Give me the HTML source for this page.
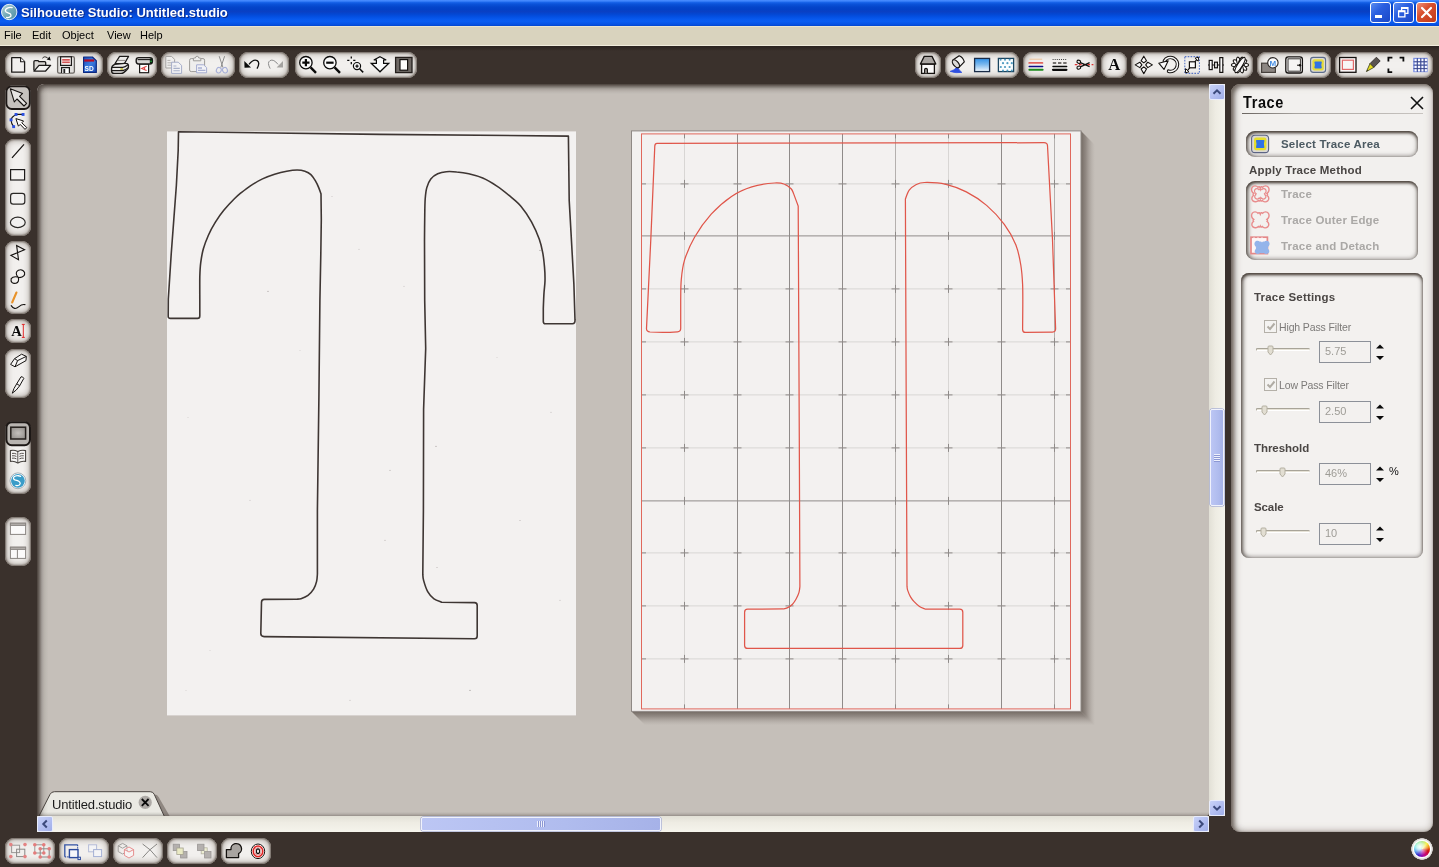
<!DOCTYPE html>
<html lang="en">
<head>
<meta charset="utf-8">
<title>Silhouette Studio: Untitled.studio</title>
<style>
*{box-sizing:border-box;margin:0;padding:0}
html,body{width:1439px;height:867px;overflow:hidden;background:#3a312c}
body{position:relative;font-family:"Liberation Sans",sans-serif;font-size:11px;color:#000}
.abs{position:absolute}
svg{position:absolute;overflow:visible}
#title{position:absolute;left:0;top:0;width:1439px;height:26px;
 background:linear-gradient(to bottom,#4a8cff 0,#3d84fb 4%,#1560e6 10%,#0a52d8 16%,#0444c9 28%,#0341c6 36%,#0a40c4 45%,#0447d2 54%,#0450e2 64%,#0859ee 74%,#0a5df2 82%,#0856e8 90%,#0650e2 95%,#0346cc 100%)}
#title .txt{position:absolute;left:20.5px;top:5px;font:bold 13px/16px "Liberation Sans",sans-serif;color:#fff;text-shadow:1px 1px 0 #0a2a8a;white-space:nowrap;letter-spacing:.03px}
.wb{position:absolute;top:2px;width:21px;height:21px;border:1px solid #fff;border-radius:3px;
 background:linear-gradient(135deg,#5a8cf0 0,#2a5fe0 40%,#1a48c8 100%)}
.wb.close{background:linear-gradient(135deg,#f0907a 0,#d8502e 40%,#c03a1a 100%)}
#menu{position:absolute;left:0;top:26px;width:1439px;height:20px;background:#d9d3be;border-top:1px solid #e9e4d2;border-bottom:1px solid #f1ecdc}
#menu span{position:absolute;top:1.3px;font:11px/14px "Liberation Sans",sans-serif;color:#000;white-space:nowrap}
#tb{position:absolute;left:0;top:46px;width:1439px;height:38px;background:linear-gradient(to bottom,#2a2320 0,#3a312c 5px)}
.g{position:absolute;background:#f2f0ee;border-radius:9px;box-shadow:inset 0 0 2px 1px rgba(84,74,66,.8),inset 0 0 6px 2px rgba(140,130,122,.6)}
.gt{top:52px;height:26px}
.gl{left:5px;width:26px}
.gb{top:838px;height:26px;width:50px}
#canvas{position:absolute;left:37px;top:83.6px;width:1172px;height:732.4px;background:#c5bfb9;border-radius:7px 0 3px 0;overflow:hidden}
#canvas:before{content:"";position:absolute;left:0;top:0;right:0;bottom:0;border-radius:7px 0 3px 0;
 background:linear-gradient(to right,rgba(59,51,46,.85) 0,rgba(59,51,46,.5) 2px,rgba(59,51,46,.2) 5px,rgba(59,51,46,.06) 8px,rgba(59,51,46,0) 11px) no-repeat,
 linear-gradient(to bottom,rgba(59,51,46,.85) 0,rgba(59,51,46,.46) 2px,rgba(59,51,46,.18) 5px,rgba(59,51,46,.06) 8px,rgba(59,51,46,0) 10px) no-repeat,
 linear-gradient(to top,rgba(59,51,46,.35) 0,rgba(59,51,46,.12) 2px,rgba(59,51,46,0) 4px) no-repeat;
 box-shadow:inset 3px 3px 3px 0 rgba(59,51,46,.35);pointer-events:none;z-index:5}
.sb{position:absolute;width:16px;height:16px;background:linear-gradient(135deg,#c8d2f8 0,#b0bcf0 60%,#a0aee8 100%);border:1px solid #e8ecfc;border-radius:2px}
.th{position:absolute;background:linear-gradient(to right,#bcc6f4 0,#b0bcee 60%,#a6b2e8 100%);border:1px solid #f0f2fc;border-radius:2px;box-shadow:0 0 0 .5px #8a96d0}
#panel{position:absolute;left:1231px;top:84px;width:202px;height:748px;background:#f2f0ee;border-radius:9px;box-shadow:inset 0 0 2px 0 rgba(110,100,92,.7),inset 0 0 7px 1px rgba(140,130,122,.5),inset 3px 3px 4px -1px rgba(70,60,52,.7),inset 6px 0 7px -3px rgba(70,60,52,.5)}
#panel>*{margin-left:1px}
.ptitle{position:absolute;left:10.8px;top:10px;font:bold 14.5px/17px "Liberation Sans",sans-serif;letter-spacing:.6px;color:#0a0a0a;transform:scaleY(1.09);transform-origin:0 3px}
.inset{position:absolute;border-radius:9px;background:#f3f1ef;box-shadow:inset 0 2px 3px 0 rgba(60,50,44,.85),inset 3px 0 4px -1px rgba(70,60,54,.55),inset 0 0 4px 1px rgba(90,80,74,.55),inset 0 -2px 2px 0 rgba(255,255,255,.7)}
.pb{position:absolute;font:bold 11.5px/14px "Liberation Sans",sans-serif;white-space:nowrap}
.pb.dis{color:#aaa8a6;letter-spacing:.2px}
.pl{position:absolute;font:10.5px/13px "Liberation Sans",sans-serif;color:#7c7a78;white-space:nowrap;letter-spacing:-.13px;margin-top:1px}
.cb{position:absolute;width:13px;height:13px;border:1px solid #b4b0a8;background:#f4f3f1}
.inp{position:absolute;left:87px;width:52px;height:22px;border:1px solid #8c9098;background:#f3f1ef;font:11px/19px "Liberation Sans",sans-serif;color:#9e9c96;padding-left:5px}
.trk{position:absolute;left:24px;width:54px;height:3px;border-radius:1.5px;background:#e6e2d6;border-top:1px solid #a8a498;border-left:1px solid #a8a498;border-bottom:1px solid #fff}
#menu span,#title .txt,.ptitle,.pb,.pl,.inp,.tabtxt{will-change:transform}
</style>
</head>
<body>
<div id="title">
 <svg style="left:0;top:3px" width="19" height="19" viewBox="0 0 19 19"><defs><linearGradient id="lg1" x1="0" y1="0" x2="1" y2="1"><stop offset="0" stop-color="#b8d8de"/><stop offset=".5" stop-color="#74a9b8"/><stop offset="1" stop-color="#4f8ea4"/></linearGradient></defs><circle cx="9.2" cy="9" r="7.7" fill="url(#lg1)" stroke="#e4f0fa" stroke-width="1"/><path d="M12.2 4.6C9 3.6 4.8 5.6 5.4 8.2C6 10.4 10.6 9.2 11 12C11.3 14 8.6 15 6.6 14.4" fill="none" stroke="#fff" stroke-width="1.3" stroke-linecap="round"/></svg>
 <div class="txt">Silhouette Studio: Untitled.studio</div>
 <div class="wb" style="left:1370px"></div>
 <div class="wb" style="left:1393px"></div>
 <div class="wb close" style="left:1416px"></div>
</div>
<div id="menu">
 <span style="left:3.9px">File</span><span style="left:32px">Edit</span><span style="left:62px">Object</span><span style="left:106.5px">View</span><span style="left:140px">Help</span>
</div>
<div id="tb"></div>
<div class="g gt" style="left:5px;width:98px"></div>
<div class="g gt" style="left:107px;width:50px"></div>
<div class="g gt" style="left:161px;width:74px"></div>
<div class="g gt" style="left:239px;width:50px"></div>
<div class="g gt" style="left:295px;width:122px"></div>
<div class="g gt" style="left:915px;width:26px"></div>
<div class="g gt" style="left:945px;width:74px"></div>
<div class="g gt" style="left:1023px;width:74px"></div>
<div class="g gt" style="left:1101px;width:26px"></div>
<div class="g gt" style="left:1131px;width:122px"></div>
<div class="g gt" style="left:1257px;width:74px"></div>
<div class="g gt" style="left:1335px;width:98px"></div>

<div class="g gl" style="top:85.4px;height:48.8px"></div>
<div class="g gl" style="top:138.8px;height:97.2px"></div>
<div class="g gl" style="top:240.8px;height:73px"></div>
<div class="g gl" style="top:319.2px;height:24.2px"></div>
<div class="g gl" style="top:349px;height:48.8px"></div>
<div class="g gl" style="top:421.4px;height:72.8px"></div>
<div class="g gl" style="top:517px;height:49px"></div>

<div id="canvas">
<svg id="cv" style="left:0;top:0" width="1172" height="732" viewBox="37 83.6 1172 732">
<!-- left scan -->
<rect x="167" y="131" width="409" height="584" fill="#f3f1f0"/>
<g id="speck"><circle cx="404" cy="286" r="0.6" fill="#6a625e" opacity="0.25"/><circle cx="268" cy="291" r="0.6" fill="#6a625e" opacity="0.50"/><circle cx="497" cy="357" r="0.5" fill="#6a625e" opacity="0.25"/><circle cx="551" cy="412" r="0.7" fill="#6a625e" opacity="0.25"/><circle cx="436" cy="446" r="0.6" fill="#6a625e" opacity="0.50"/><circle cx="437" cy="567" r="0.5" fill="#6a625e" opacity="0.50"/><circle cx="188" cy="417" r="0.5" fill="#6a625e" opacity="0.25"/><circle cx="332" cy="196" r="0.5" fill="#6a625e" opacity="0.35"/><circle cx="359" cy="249" r="0.6" fill="#6a625e" opacity="0.25"/><circle cx="300" cy="350" r="0.5" fill="#6a625e" opacity="0.25"/><circle cx="390" cy="470" r="0.7" fill="#6a625e" opacity="0.35"/><circle cx="520" cy="520" r="0.5" fill="#6a625e" opacity="0.50"/><circle cx="210" cy="650" r="0.5" fill="#6a625e" opacity="0.25"/><circle cx="470" cy="690" r="0.7" fill="#6a625e" opacity="0.50"/><circle cx="350" cy="700" r="0.7" fill="#6a625e" opacity="0.25"/><circle cx="540" cy="250" r="0.7" fill="#6a625e" opacity="0.50"/><circle cx="250" cy="500" r="0.6" fill="#6a625e" opacity="0.25"/><circle cx="186" cy="690" r="0.5" fill="#6a625e" opacity="0.25"/><circle cx="560" cy="600" r="0.7" fill="#6a625e" opacity="0.25"/><circle cx="385" cy="540" r="0.6" fill="#6a625e" opacity="0.35"/></g>
<path id="tl" d="M178.5 131.4L380.0 134.0L568.4 135.7L569.2 200.0L571.0 232.0L573.9 284.0L575.0 319.5Q575.2 323.2 572.5 323.3L545.4 323.3Q543.3 323.3 543.3 321L543.3 308.0C543.4 305.4 543.7 297.1 544.0 292.5C544.3 287.9 544.9 284.6 545.0 280.3C545.1 276.0 544.9 271.1 544.5 266.5C544.1 261.9 543.7 257.3 542.8 252.7C541.9 248.1 541.2 244.0 539.3 238.8C537.4 233.6 534.5 227.0 531.5 221.5C528.5 216.0 524.7 210.3 521.1 206.0C517.5 201.7 514.1 199.2 510.0 195.8C505.9 192.4 501.1 188.5 496.5 185.5C491.9 182.5 487.3 179.7 482.7 177.7C478.1 175.7 473.1 174.4 468.8 173.4C464.5 172.4 460.4 171.9 456.7 171.6C452.9 171.2 449.5 171.0 446.3 171.3C443.1 171.6 440.3 172.2 437.7 173.4C435.1 174.6 432.6 176.2 430.8 178.5C429.0 180.8 427.7 183.9 426.8 187.2C425.9 190.5 425.6 193.1 425.2 198.4C424.8 203.7 424.8 212.3 424.7 219.2C424.6 226.1 424.5 236.5 424.5 240.0L424.7 300.0L425.7 348.0L423.6 409.0L423.4 510.0L422.8 574.0C422.9 575.0 422.8 577.1 423.6 580.0C424.4 582.9 426.0 588.2 427.7 591.3C429.4 594.4 431.7 596.8 434.0 598.5C436.3 600.2 440.4 601.2 441.7 601.8L474.5 602.2Q477.2 602.2 477.2 605L477.2 635.5Q477.2 638.3 474.5 638.3L264.1 636.2Q260.8 636.2 260.8 633.2L261.5 601.8Q261.6 599 264.3 599L297.0 598.8C297.7 598.7 299.2 598.9 301.0 598.3C302.8 597.7 305.9 596.6 308.0 595.0C310.1 593.4 312.2 591.1 313.6 588.8C315.0 586.5 316.0 583.5 316.6 581.0C317.2 578.5 317.3 574.8 317.4 573.6L317.4 510.0L318.9 397.0L319.9 300.0L320.8 253.8L321.3 219.2L321.0 193.3C320.6 192.3 319.6 189.4 318.7 187.2C317.8 185.0 316.6 182.5 315.3 180.3C314.0 178.1 312.6 175.8 310.9 174.2C309.2 172.6 307.2 171.6 304.9 170.8C302.6 170.0 300.1 169.6 297.1 169.6C294.1 169.6 290.4 170.1 286.7 170.8C282.9 171.5 278.6 172.6 274.6 173.9C270.6 175.2 266.5 176.6 262.5 178.5C258.5 180.4 254.2 183.0 250.4 185.5C246.7 188.0 242.7 191.2 240.0 193.3C237.3 195.5 237.1 195.7 234.4 198.4C231.7 201.1 227.2 205.8 224.0 209.7C220.8 213.6 218.0 217.6 215.4 221.8C212.8 226.0 210.4 230.3 208.4 234.8C206.4 239.3 204.6 244.0 203.3 248.6C202.0 253.2 201.3 257.9 200.7 262.5C200.1 267.1 200.0 270.2 199.8 276.3C199.7 282.4 199.8 295.1 199.8 298.8L199.8 315.5Q199.8 318 197.5 318L170.5 318.0Q168 318 168.2 315.5L168.3 298.8L171.2 253.8L173.8 219.2L176.4 184.6L178.2 150.0Z" fill="none" stroke="#3e3633" stroke-width="1.6" stroke-linejoin="round"/>
<!-- right page -->
<defs><linearGradient id="shr" x1="0" y1="0" x2="1" y2="0"><stop offset="0" stop-color="#6f665f" stop-opacity=".95"/><stop offset=".35" stop-color="#857c76" stop-opacity=".8"/><stop offset="1" stop-color="#a8a09a" stop-opacity="0"/></linearGradient>
<linearGradient id="shb" x1="0" y1="0" x2="0" y2="1"><stop offset="0" stop-color="#6f665f" stop-opacity=".95"/><stop offset=".35" stop-color="#857c76" stop-opacity=".8"/><stop offset="1" stop-color="#a8a09a" stop-opacity="0"/></linearGradient></defs>
<polygon points="1081,130.5 1095,144.5 1095,725 1081,711" fill="url(#shr)"/>
<polygon points="631.5,711 1081,711 1095,725 645.5,725" fill="url(#shb)"/>
<rect x="631.5" y="130.5" width="449.5" height="580.5" fill="#f3f1f0" stroke="#8f8985" stroke-width="1"/>
<g id="grid" stroke="#9a9a9a" stroke-width="1" fill="none"><path d="M684.5 133.5V708.5M948.5 133.5V708.5M641.5 183.5H1070.5M641.5 288.5H1070.5M641.5 341.5H1070.5M641.5 394.5H1070.5M641.5 447.5H1070.5M641.5 552.5H1070.5M641.5 605.5H1070.5M641.5 658.5H1070.5" stroke="#d8d6d4"/><path d="M895.5 133.5V708.5M1054.5 133.5V708.5" stroke="#b4b0ae"/><path d="M737.5 133.5V708.5M789.5 133.5V708.5M842.5 133.5V708.5M1001.5 133.5V708.5M641.5 235.5H1070.5M641.5 500.5H1070.5" stroke="#8f8b89"/><path d="M680.5 183.5h8M684.5 179.5v8M684.5 231.5v8M680.5 288.5h8M684.5 284.5v8M680.5 341.5h8M684.5 337.5v8M680.5 394.5h8M684.5 390.5v8M680.5 447.5h8M684.5 443.5v8M684.5 496.5v8M680.5 552.5h8M684.5 548.5v8M680.5 605.5h8M684.5 601.5v8M680.5 658.5h8M684.5 654.5v8M733.5 183.5h8M733.5 288.5h8M733.5 341.5h8M733.5 394.5h8M733.5 447.5h8M733.5 552.5h8M733.5 605.5h8M733.5 658.5h8M785.5 183.5h8M785.5 288.5h8M785.5 341.5h8M785.5 394.5h8M785.5 447.5h8M785.5 552.5h8M785.5 605.5h8M785.5 658.5h8M838.5 183.5h8M838.5 288.5h8M838.5 341.5h8M838.5 394.5h8M838.5 447.5h8M838.5 552.5h8M838.5 605.5h8M838.5 658.5h8M891.5 183.5h8M895.5 179.5v8M895.5 231.5v8M891.5 288.5h8M895.5 284.5v8M891.5 341.5h8M895.5 337.5v8M891.5 394.5h8M895.5 390.5v8M891.5 447.5h8M895.5 443.5v8M895.5 496.5v8M891.5 552.5h8M895.5 548.5v8M891.5 605.5h8M895.5 601.5v8M891.5 658.5h8M895.5 654.5v8M944.5 183.5h8M948.5 179.5v8M948.5 231.5v8M944.5 288.5h8M948.5 284.5v8M944.5 341.5h8M948.5 337.5v8M944.5 394.5h8M948.5 390.5v8M944.5 447.5h8M948.5 443.5v8M948.5 496.5v8M944.5 552.5h8M948.5 548.5v8M944.5 605.5h8M948.5 601.5v8M944.5 658.5h8M948.5 654.5v8M997.5 183.5h8M997.5 288.5h8M997.5 341.5h8M997.5 394.5h8M997.5 447.5h8M997.5 552.5h8M997.5 605.5h8M997.5 658.5h8M1050.5 183.5h8M1054.5 179.5v8M1054.5 231.5v8M1050.5 288.5h8M1054.5 284.5v8M1050.5 341.5h8M1054.5 337.5v8M1050.5 394.5h8M1054.5 390.5v8M1050.5 447.5h8M1054.5 443.5v8M1054.5 496.5v8M1050.5 552.5h8M1054.5 548.5v8M1050.5 605.5h8M1054.5 601.5v8M1050.5 658.5h8M1054.5 654.5v8M641.5 183.5h4.5M1070.5 183.5h-4.5M641.5 288.5h4.5M1070.5 288.5h-4.5M641.5 341.5h4.5M1070.5 341.5h-4.5M641.5 394.5h4.5M1070.5 394.5h-4.5M641.5 447.5h4.5M1070.5 447.5h-4.5M641.5 552.5h4.5M1070.5 552.5h-4.5M641.5 605.5h4.5M1070.5 605.5h-4.5M641.5 658.5h4.5M1070.5 658.5h-4.5M684.5 133.5v4.5M684.5 708.5v-4.5M895.5 133.5v4.5M895.5 708.5v-4.5M948.5 133.5v4.5M948.5 708.5v-4.5M1054.5 133.5v4.5M1054.5 708.5v-4.5" stroke="#8f8b89"/></g>
<path id="tr" d="M657 143L1044.0 142.3Q1047.3 142.3 1047.5 145.3L1052.5 239.2L1055.6 328.0Q1055.8 331.6 1052.5 331.7L1025.5 332.0Q1022.6 332 1022.6 329L1022.8 305.0C1022.8 301.5 1022.9 290.7 1022.6 284.0C1022.3 277.3 1021.9 271.2 1020.8 264.6C1019.7 258.0 1018.5 251.1 1015.8 244.3C1013.0 237.5 1009.2 230.6 1004.3 224.0C999.4 217.4 992.9 210.4 986.6 205.0C980.3 199.6 973.1 195.0 966.3 191.5C959.5 188.0 953.0 185.5 946.0 183.9C939.0 182.3 929.5 182.0 924.4 182.1C919.3 182.2 918.0 183.3 915.5 184.6C913.0 185.9 910.9 187.4 909.2 189.7C907.5 192.0 906.0 197.1 905.4 198.6L906.2 400.0L907.0 586.0C907.1 586.7 907.1 588.2 907.7 590.0C908.3 591.8 909.4 594.6 910.5 596.5C911.6 598.4 912.6 599.6 914.1 601.2C915.6 602.8 917.6 604.7 919.5 606.0C921.4 607.3 924.5 608.3 925.5 608.8L959.7 608.8Q962.8 608.8 962.8 611.8L962.8 645.1Q962.8 648.1 959.7 648.1L747.6 648.1Q744.6 648.1 744.6 645.1L744.6 611.8Q744.6 608.8 747.6 608.8L783.0 608.6C783.7 608.4 785.6 608.3 787.2 607.5C788.8 606.7 791.0 605.3 792.5 603.8C794.0 602.3 795.0 600.6 796.1 598.6C797.2 596.6 798.4 594.1 799.0 592.0C799.6 589.9 799.8 587.0 799.9 586.0L799.3 440.0L798.2 205.7L793.5 193.0C793.1 192.2 792.6 189.9 791.1 188.4C789.6 186.9 787.5 184.9 784.8 183.9C782.0 182.9 780.1 182.2 774.6 182.6C769.1 183.0 759.0 184.2 751.8 186.4C744.6 188.6 738.3 191.4 731.5 196.0C724.7 200.6 717.3 207.0 711.2 213.8C705.1 220.6 699.1 229.0 694.7 236.6C690.3 244.2 686.8 252.4 684.6 259.5C682.4 266.6 681.9 272.2 681.3 279.0C680.6 285.8 680.8 296.5 680.7 300.0L680.7 328.2Q680.7 331.3 677.5 331.5Q663 332.5 650 331.6Q646.3 331 646.5 328L650.8 239.2L654.8 145.5Q655 143 657 143Z" fill="none" stroke="#e0564a" stroke-width="1.25"/>
<rect x="641.5" y="133.5" width="429" height="575" fill="none" stroke="#e0685c" stroke-width="1"/>
</svg>

</div>
<div class="abs" style="left:1209px;top:84px;width:16px;height:732px;background:linear-gradient(to right,#e2e0d6 0,#eeece3 40%,#f5f4ec 100%)"></div>
<div class="abs" style="left:37px;top:816px;width:1172px;height:16px;background:linear-gradient(to bottom,#e2e0d6 0,#eeece3 40%,#f5f4ec 100%)"></div>
<div class="sb" style="left:1209px;top:84px"><svg style="left:2px;top:2px" width="10" height="10" viewBox="0 0 10 10"><path d="M1.5 6.8L5 3.3L8.5 6.8" fill="none" stroke="#3c4a7c" stroke-width="2" transform="rotate(0 5 5)"/></svg></div>
<div class="sb" style="left:1209px;top:800px"><svg style="left:2px;top:2px" width="10" height="10" viewBox="0 0 10 10"><path d="M1.5 6.8L5 3.3L8.5 6.8" fill="none" stroke="#3c4a7c" stroke-width="2" transform="rotate(180 5 5)"/></svg></div>
<div class="sb" style="left:37px;top:816px"><svg style="left:2px;top:2px" width="10" height="10" viewBox="0 0 10 10"><path d="M1.5 6.8L5 3.3L8.5 6.8" fill="none" stroke="#3c4a7c" stroke-width="2" transform="rotate(270 5 5)"/></svg></div>
<div class="sb" style="left:1193px;top:816px"><svg style="left:2px;top:2px" width="10" height="10" viewBox="0 0 10 10"><path d="M1.5 6.8L5 3.3L8.5 6.8" fill="none" stroke="#3c4a7c" stroke-width="2" transform="rotate(90 5 5)"/></svg></div>
<div class="th" style="left:1210px;top:409px;width:14px;height:97px"><div class="abs" style="left:3px;top:44px;width:6px;height:8px;background:repeating-linear-gradient(to bottom,#eef0fc 0,#eef0fc 1px,#8c98d4 1px,#8c98d4 2px)"></div></div>
<div class="th" style="left:421px;top:817px;width:240px;height:14px"><div class="abs" style="left:115px;top:3px;width:8px;height:6px;background:repeating-linear-gradient(to right,#eef0fc 0,#eef0fc 1px,#8c98d4 1px,#8c98d4 2px)"></div></div>

<div id="panel">
 <div class="ptitle">Trace</div>
 <svg style="left:178px;top:12px" width="14" height="14" viewBox="0 0 14 14"><path d="M1 1L13 13M13 1L1 13" stroke="#111" stroke-width="1.6" fill="none"/></svg>
 <div class="abs" style="left:10px;top:29px;width:181px;height:1px;background:linear-gradient(to right,#6a6460,#a8a4a0 30%,#c8c4c0 100%)"></div>
 <div class="inset" style="left:14px;top:47px;width:172px;height:26px"></div>
 <div class="pb" style="left:49px;top:53px;color:#4c5a62;letter-spacing:.2px">Select Trace Area</div>
 <div class="pb" style="left:17px;top:79px;color:#4a4644;letter-spacing:.2px">Apply Trace Method</div>
 <div class="inset" style="left:14px;top:97px;width:172px;height:79px"></div>
 <div class="pb dis" style="left:49px;top:103px">Trace</div>
 <div class="pb dis" style="left:49px;top:129px">Trace Outer Edge</div>
 <div class="pb dis" style="left:49px;top:155px">Trace and Detach</div>
 <div class="inset" style="left:9px;top:189px;width:182px;height:285px;border-radius:8px"></div>
 <div class="pb" style="left:22px;top:206px;color:#4a4644;letter-spacing:.2px">Trace Settings</div>
 <div class="cb" style="left:32px;top:236px"></div>
 <div class="pl" style="left:46.6px;top:236px">High Pass Filter</div>
 <div class="cb" style="left:32px;top:294px"></div>
 <div class="pl" style="left:46.6px;top:294px">Low Pass Filter</div>
 <div class="pb" style="left:22px;top:357px;color:#4a4644;letter-spacing:-.05px">Threshold</div>
 <div class="pb" style="left:21.5px;top:416px;color:#4a4644;letter-spacing:-.1px">Scale</div>
 <div class="inp" style="top:257px">5.75</div>
 <div class="inp" style="top:317px">2.50</div>
 <div class="inp" style="top:379px">46%</div>
 <div class="inp" style="top:439px">10</div>
 <div class="pl" style="left:157px;top:380px;color:#111;font-size:11px">%</div>
 <div class="trk" style="top:264.0px"></div><svg style="left:34.5px;top:260.5px" width="7" height="11" viewBox="0 0 7 11"><path d="M1 2Q1 1 2 1H5Q6 1 6 2V7L3.5 10L1 7Z" fill="#e2ded2" stroke="#b4b0a2" stroke-width="1"/></svg>
 <div class="trk" style="top:324.0px"></div><svg style="left:28.5px;top:320.5px" width="7" height="11" viewBox="0 0 7 11"><path d="M1 2Q1 1 2 1H5Q6 1 6 2V7L3.5 10L1 7Z" fill="#e2ded2" stroke="#b4b0a2" stroke-width="1"/></svg>
 <div class="trk" style="top:386.0px"></div><svg style="left:46.5px;top:382.5px" width="7" height="11" viewBox="0 0 7 11"><path d="M1 2Q1 1 2 1H5Q6 1 6 2V7L3.5 10L1 7Z" fill="#e2ded2" stroke="#b4b0a2" stroke-width="1"/></svg>
 <div class="trk" style="top:446.0px"></div><svg style="left:27.7px;top:442.5px" width="7" height="11" viewBox="0 0 7 11"><path d="M1 2Q1 1 2 1H5Q6 1 6 2V7L3.5 10L1 7Z" fill="#e2ded2" stroke="#b4b0a2" stroke-width="1"/></svg>
 <svg style="left:143.5px;top:260.0px" width="8" height="17" viewBox="0 0 8 17"><path d="M0 4.5L4 .5L8 4.5ZM0 12L4 16L8 12Z" fill="#0a0a0a"/></svg>
 <svg style="left:143.5px;top:320.3px" width="8" height="17" viewBox="0 0 8 17"><path d="M0 4.5L4 .5L8 4.5ZM0 12L4 16L8 12Z" fill="#0a0a0a"/></svg>
 <svg style="left:143.5px;top:382.4px" width="8" height="17" viewBox="0 0 8 17"><path d="M0 4.5L4 .5L8 4.5ZM0 12L4 16L8 12Z" fill="#0a0a0a"/></svg>
 <svg style="left:143.5px;top:442.0px" width="8" height="17" viewBox="0 0 8 17"><path d="M0 4.5L4 .5L8 4.5ZM0 12L4 16L8 12Z" fill="#0a0a0a"/></svg>
 <svg style="left:33.5px;top:238.0px" width="10" height="10" viewBox="0 0 10 10"><path d="M1.5 4.5L4 7L8.5 1.5" fill="none" stroke="#b0aca4" stroke-width="2"/></svg>
 <svg style="left:33.5px;top:296.3px" width="10" height="10" viewBox="0 0 10 10"><path d="M1.5 4.5L4 7L8.5 1.5" fill="none" stroke="#b0aca4" stroke-width="2"/></svg>
</div>

<div class="g gb" style="left:5px"></div>
<div class="g gb" style="left:59px"></div>
<div class="g gb" style="left:113px"></div>
<div class="g gb" style="left:167px"></div>
<div class="g gb" style="left:221px"></div>

<div class="abs" style="left:1411px;top:838px;width:22px;height:22px;border-radius:50%;background:radial-gradient(circle at 50% 50%,#fff 0,#fff 8.6px,#e8e6e4 9.4px,#d0ccc8 10.6px,rgba(120,110,104,.4) 11px)"></div>
<div class="abs" style="left:1413.6px;top:840.6px;width:16.8px;height:16.8px;border-radius:50%;background:radial-gradient(circle at 38% 36%,rgba(255,255,255,.98) 0,rgba(255,255,255,.75) 22%,rgba(255,255,255,0) 62%),conic-gradient(from 0deg,#7ad83c 0deg,#f2ee20 40deg,#f28a10 75deg,#d01010 105deg,#c80878 150deg,#8a10b8 185deg,#2a18c8 215deg,#1c8ae8 255deg,#30e0d8 290deg,#40d860 330deg,#7ad83c 360deg)"></div>
<svg style="left:37px;top:788px" width="140" height="30" viewBox="37 788 140 30"><path d="M52 816L60 797Q61.4 794.6 64 794.6H154.6Q157.2 794.6 158.6 797L169.6 816Z" fill="#6a625c" opacity=".6"/><path d="M39 816L50 794.4Q51.4 791.7 54.4 791.7H150.2Q153 791.7 154.2 794.2L164.2 816Z" fill="#eae9e3"/><path d="M39 816L50 794.4Q51.4 791.7 54.4 791.7H150.2Q153 791.7 154.2 794.2L164.2 816" fill="none" stroke="#4a4440" stroke-width="1"/><circle cx="145.2" cy="802.4" r="6.6" fill="#aeaaa6"/><path d="M141.8 799L148.6 805.8M148.6 799L141.8 805.8" stroke="#0a0a0a" stroke-width="1.8"/></svg>
<div class="abs tabtxt" style="left:52.3px;top:797px;font:13px/16px 'Liberation Sans',sans-serif;letter-spacing:-.15px;color:#1a1a1a;white-space:nowrap">Untitled.studio</div>
<!-- ICONS-START --><svg id="icons" style="left:0;top:0;pointer-events:none;will-change:transform" width="1439" height="867" viewBox="0 0 1439 867">
<!-- group -->
<rect x="11.6" y="845.2" width="8" height="7.4" fill="none" stroke="#9a9896" stroke-width="1"/>
<rect x="16.6" y="849.2" width="8.2" height="7.4" fill="none" stroke="#8a8886" stroke-width="1"/>
<g fill="#e48484"><circle cx="10.8" cy="844.6" r="1.8"/><circle cx="25" cy="844.6" r="1.8"/><circle cx="10.8" cy="856.6" r="1.8"/><circle cx="25" cy="856.6" r="1.8"/></g>
<!-- ungroup -->
<rect x="34.8" y="844.8" width="9" height="8.2" fill="none" stroke="#9a9896" stroke-width="1"/>
<rect x="40.2" y="848.8" width="9" height="8.2" fill="none" stroke="#8a8886" stroke-width="1"/>
<g fill="#e47c7c"><circle cx="34.8" cy="844.8" r="1.8"/><circle cx="43.8" cy="844.8" r="1.8"/><circle cx="34.8" cy="853" r="1.8"/><circle cx="43.8" cy="853" r="1.8"/><circle cx="40.2" cy="848.8" r="1.8"/><circle cx="49.2" cy="848.8" r="1.8"/><circle cx="40.2" cy="857" r="1.8"/><circle cx="49.2" cy="857" r="1.8"/></g>
<!-- select all -->
<path d="M77.6 844.8H64.8V856.8" fill="none" stroke="#3252a4" stroke-width="1.3"/>
<path d="M77.6 844.8V849M64.8 856.8H69" fill="none" stroke="#3252a4" stroke-width="1.2" stroke-dasharray="1.4 1"/>
<rect x="69.4" y="849.6" width="8.6" height="8" fill="#f6f6fa" stroke="#2c4a9c" stroke-width="1.4"/>
<rect x="78" y="857.2" width="2.4" height="2.4" fill="#f6f6fa" stroke="#2c4a9c" stroke-width="1"/>
<!-- deselect -->
<rect x="88.6" y="844.8" width="8" height="7" fill="#f4f4f6" stroke="#b4bcd8" stroke-width="1"/>
<rect x="93.6" y="849.6" width="8" height="7" fill="#f4f4f6" stroke="#a4b0d4" stroke-width="1"/>
<!-- duplicate -->
<path d="M122.6 843.4L127 845.8V851.6L122.6 854L118.2 851.6V845.8ZM118.2 845.8L122.6 848.2L127 845.8" fill="none" stroke="#9a9896" stroke-width=".9" stroke-linejoin="round"/>
<path d="M129 847L133.6 849.6V855.4L129 858L124.4 855.4V849.6ZM124.4 849.6L129 852L133.6 849.6" fill="#f8f4f4" stroke="#e48484" stroke-width=".9" stroke-linejoin="round"/>
<!-- delete -->
<path d="M142.6 844Q150.6 849 157 857.6M157 844Q149 849.6 142.6 857.6" fill="none" stroke="#7c7a78" stroke-width=".9"/>
<!-- bring front -->
<rect x="173.2" y="844.2" width="6.4" height="6.4" fill="#b4b0ae" stroke="#9a9694" stroke-width=".8"/>
<rect x="180.6" y="851.6" width="6.4" height="6.4" fill="#b4b0ae" stroke="#9a9694" stroke-width=".8"/>
<rect x="176.8" y="848" width="6.4" height="6.4" fill="#eaeac4" stroke="#a4a290" stroke-width=".8"/>
<!-- send back -->
<rect x="201.2" y="847.8" width="6" height="6" fill="#eeeed4" stroke="#b4b2a0" stroke-width=".8"/>
<rect x="197.6" y="844.2" width="6.4" height="6.4" fill="#b4b0ae" stroke="#9a9694" stroke-width=".8"/>
<rect x="204.6" y="851.6" width="6.4" height="6.4" fill="#b4b0ae" stroke="#9a9694" stroke-width=".8"/>
<!-- weld -->
<path d="M226.4 849.6H231A5.3 5.3 0 1 1 238.6 853.6V857.6H226.4Z" fill="#a8a4a0" stroke="#14110f" stroke-width="1.3" stroke-linejoin="round"/>
<!-- offset -->
<ellipse cx="258" cy="851.3" rx="6.7" ry="7.3" fill="#fbfafa" stroke="#14110f" stroke-width="1"/>
<ellipse cx="258" cy="851.3" rx="4.8" ry="5.4" fill="none" stroke="#e02424" stroke-width="1.5"/>
<ellipse cx="258" cy="851.3" rx="3.2" ry="3.8" fill="none" stroke="#e87070" stroke-width=".7"/>
<ellipse cx="258" cy="851.3" rx="1.6" ry="2.4" fill="none" stroke="#14110f" stroke-width="1.2"/>
<!-- window buttons -->
<rect x="1375" y="15" width="7" height="3" fill="#fff"/>
<path d="M1401.6 10.6V7.6H1407.9V13.4H1405.6M1398.6 11H1404.9V16.8H1398.6Z" fill="none" stroke="#fff" stroke-width="1.3"/>
<path d="M1398.6 11.4H1404.9M1401.6 8H1407.9" stroke="#fff" stroke-width="1.8"/>
<path d="M1422 8L1431 17M1431 8L1422 17" stroke="#fff" stroke-width="2.2" stroke-linecap="round"/>
<!-- selected box: select tool -->
<rect x="6.4" y="86.4" width="23.4" height="22.6" rx="5.4" fill="#c6c2be" stroke="#1c1715" stroke-width="1.8"/>
<path d="M10.3 88.8L22.6 93.4L19.6 96.4L26.6 103.4L24 106L17 99L14.3 101.9Z" fill="#e6e4e2" stroke="#14110f" stroke-width="1.1" stroke-linejoin="round"/>
<!-- edit points -->
<path d="M16 114.4H23M16 114.4Q11.4 117 11 119.8Q11.2 123.6 13.6 126.6" fill="none" stroke="#14110f" stroke-width="1.1"/>
<g fill="#2c50e2"><rect x="14.6" y="113" width="2.9" height="2.9"/><rect x="21.6" y="113" width="2.9" height="2.9"/><rect x="9.6" y="118.4" width="2.9" height="2.9"/><rect x="12.2" y="125.2" width="2.9" height="2.9"/></g>
<path d="M15.9 118.6L23.6 121L21.8 122.8L26.8 127.6L25 129.4L20.2 124.4L18.4 126.2Z" fill="#fbfafa" stroke="#14110f" stroke-width="1" stroke-linejoin="round"/>
<!-- line -->
<path d="M12 157.8L24 144.3" stroke="#14110f" stroke-width="1.2"/>
<!-- rect -->
<rect x="10.6" y="169.6" width="14" height="10.4" fill="#f2f1f0" stroke="#1c1a19" stroke-width="1.2"/>
<!-- rounded rect -->
<rect x="10.6" y="193.4" width="14.2" height="10.8" rx="2.6" fill="#f2f1f0" stroke="#2a2826" stroke-width="1.2"/>
<!-- ellipse -->
<ellipse cx="17.8" cy="222.4" rx="7.4" ry="5.2" fill="#f2f1f0" stroke="#2a2826" stroke-width="1.2"/>
<!-- polygon -->
<path d="M16.6 245.4L24.6 249.7L10.9 255.4L18.5 259.8Z" fill="none" stroke="#14110f" stroke-width="1.1" stroke-linejoin="miter"/>
<!-- curve -->
<path d="M17.8 277Q14.4 272.4 18.4 270.2Q22.6 268.6 24.6 272.6Q25.4 276.6 19.6 277.6Q13.6 275.6 11.2 278.6Q10.4 282.6 14 283.4Q18.6 283.4 18.6 279.4Q18.6 278.2 17.8 277Z" fill="none" stroke="#14110f" stroke-width="1.1"/>
<!-- freehand -->
<path d="M16.4 292.6L12.2 302.4" stroke="#e8922a" stroke-width="2.2" stroke-linecap="round"/>
<path d="M11.2 305.6Q14.4 310.6 18.6 306.8Q22 304 25 304.6" fill="none" stroke="#14110f" stroke-width="1.1" stroke-linecap="round"/>
<!-- text -->
<text x="11.2" y="335.6" font-family="'Liberation Serif',serif" font-weight="bold" font-size="14.6" fill="#0a0a0a">A</text>
<path d="M23.3 324.4V337.4M21.8 324.4H24.8M21.8 337.4H24.8" stroke="#e02828" stroke-width="1"/>
<!-- eraser -->
<path d="M14.6 358.6L21.6 354.2L26.3 356.4L26 360.6L15 366.8L10.6 364.4Z" fill="#f6f5f4" stroke="#14110f" stroke-width="1" stroke-linejoin="round"/>
<path d="M14.6 358.6L17.6 360.6L26.3 356.4M17.6 360.6L15 366.8" fill="none" stroke="#14110f" stroke-width="1"/>
<!-- knife -->
<path d="M12.3 393.2Q13.4 388.6 16.6 384L21 376.8Q22.6 376.2 23.8 378.4L19.5 386Q16.6 390.4 12.3 393.2Z" fill="#f6f5f4" stroke="#14110f" stroke-width="1" stroke-linejoin="round"/>
<path d="M16.8 383.8L19.6 385.6" stroke="#14110f" stroke-width="1"/>
<!-- selected box: design view -->
<rect x="6.4" y="422.2" width="23.6" height="23" rx="5.4" fill="#b8b4b0" stroke="#1c1715" stroke-width="2"/>
<defs><radialGradient id="scr" cx=".5" cy=".5" r=".7"><stop offset="0" stop-color="#c4c0bc"/><stop offset="1" stop-color="#8c8884"/></radialGradient></defs>
<rect x="10.8" y="427.2" width="14.8" height="11.8" fill="url(#scr)" stroke="#241f1c" stroke-width="1.5"/>
<!-- library -->
<path d="M10.4 450.6Q14 449.6 17.8 451.6Q21.6 449.6 25.6 450.6V461.4Q21.6 460.6 17.8 463Q14 460.6 10.4 461.4Z" fill="#f6f5f4" stroke="#46423e" stroke-width="1.1" stroke-linejoin="round"/>
<path d="M17.8 451.6V463M12 453.4Q14.4 453 16.4 454M12 455.8Q14.4 455.4 16.4 456.4M12 458.2Q14.4 457.8 16.4 458.8M23.8 453.4Q21.4 453 19.4 454M23.8 455.8Q21.4 455.4 19.4 456.4M23.8 458.2Q21.4 457.8 19.4 458.8" fill="none" stroke="#46423e" stroke-width=".9"/>
<!-- store -->
<circle cx="17.9" cy="480.8" r="7.9" fill="#fff" stroke="#8c9aa4" stroke-width=".8"/>
<circle cx="17.9" cy="480.8" r="6.9" fill="#3a9cc8"/>
<path d="M20.6 476.4Q16.6 474.6 13.8 477Q12.6 479.2 15.6 480.2Q20 481 20.2 483.6Q19.6 486.2 15.8 485.4" fill="none" stroke="#fff" stroke-width="1.2" stroke-linecap="round"/>
<circle cx="18.6" cy="475.6" r=".7" fill="#fff"/>
<!-- window icons -->
<rect x="10.4" y="523.2" width="15.2" height="11.2" fill="#fbfafa" stroke="#8a8682" stroke-width="1"/>
<rect x="10.4" y="523.2" width="15.2" height="2.2" fill="#b4b0ac" stroke="#8a8682" stroke-width="1"/>
<rect x="10.4" y="547.2" width="15.2" height="11.2" fill="#fbfafa" stroke="#8a8682" stroke-width="1"/>
<rect x="10.4" y="547.2" width="15.2" height="2.2" fill="#b4b0ac" stroke="#8a8682" stroke-width="1"/>
<path d="M17.4 549.4V558.4" stroke="#8a8682" stroke-width="1"/>
<!-- panel: select trace area icon -->
<rect x="1251.6" y="135.2" width="17" height="17.4" rx="3.4" fill="#dad8d2" stroke="#5c6484" stroke-width="1.1"/>
<rect x="1254" y="137.6" width="12.4" height="12.6" rx="2.2" fill="#e6de2c"/>
<path d="M1256 140.8Q1255.8 140 1256.8 140H1263.6Q1264.6 140 1264.4 140.8Q1263.4 144 1264.4 147.2Q1264.6 148 1263.6 148H1256.8Q1255.8 148 1256 147.2Q1257 144 1256 140.8Z" fill="#2f72e6"/>
<!-- trace -->
<g transform="translate(1250.6 185) scale(.97 .98)"><path d="M10 3.2C9.4 1.6 8.4 1.4 7.6 2.2C6 .4 3 .4 1.6 2.4C.2 4.6 1.2 7.4 3.2 8.6C2.4 9.2 2.4 10 3 10.6C1 12 .6 14.6 2.4 16.2C4 17.6 6.6 17.4 8 15.8C8.8 16.8 9.6 16.4 10 15.4C10.4 16.4 11.2 16.8 12 15.8C13.4 17.4 16 17.6 17.6 16.2C19.4 14.6 19 12 17 10.6C17.6 10 17.6 9.2 16.8 8.6C18.8 7.4 19.8 4.6 18.4 2.4C17 .4 14 .4 12.4 2.2C11.6 1.4 10.6 1.6 10 3.2Z" fill="none" stroke="#e88c8c" stroke-width="1.45"/><path d="M10 3.2C9.4 1.6 8.4 1.4 7.6 2.2C6 .4 3 .4 1.6 2.4C.2 4.6 1.2 7.4 3.2 8.6C2.4 9.2 2.4 10 3 10.6C1 12 .6 14.6 2.4 16.2C4 17.6 6.6 17.4 8 15.8C8.8 16.8 9.6 16.4 10 15.4C10.4 16.4 11.2 16.8 12 15.8C13.4 17.4 16 17.6 17.6 16.2C19.4 14.6 19 12 17 10.6C17.6 10 17.6 9.2 16.8 8.6C18.8 7.4 19.8 4.6 18.4 2.4C17 .4 14 .4 12.4 2.2C11.6 1.4 10.6 1.6 10 3.2Z" transform="translate(3.4 3.2) scale(.66 .64)" fill="none" stroke="#e88c8c" stroke-width="1.9"/></g>
<!-- trace outer -->
<g transform="translate(1250.6 211) scale(.97 .98)"><path d="M10 3.2C9.4 1.6 8.4 1.4 7.6 2.2C6 .4 3 .4 1.6 2.4C.2 4.6 1.2 7.4 3.2 8.6C2.4 9.2 2.4 10 3 10.6C1 12 .6 14.6 2.4 16.2C4 17.6 6.6 17.4 8 15.8C8.8 16.8 9.6 16.4 10 15.4C10.4 16.4 11.2 16.8 12 15.8C13.4 17.4 16 17.6 17.6 16.2C19.4 14.6 19 12 17 10.6C17.6 10 17.6 9.2 16.8 8.6C18.8 7.4 19.8 4.6 18.4 2.4C17 .4 14 .4 12.4 2.2C11.6 1.4 10.6 1.6 10 3.2Z" fill="none" stroke="#e88c8c" stroke-width="1.45"/></g>
<!-- trace detach -->
<rect x="1251" y="237.2" width="16.4" height="16.4" fill="#fdf6f6" stroke="#e48888" stroke-width="1.7"/>
<path d="M1254 237.2V239.4M1258 237.2V239.4M1262 237.2V239.4" stroke="#fdf6f6" stroke-width="1"/>
<g transform="translate(1253.6 240) scale(.84 .82)"><path d="M10 3.2C9.4 1.6 8.4 1.4 7.6 2.2C6 .4 3 .4 1.6 2.4C.2 4.6 1.2 7.4 3.2 8.6C2.4 9.2 2.4 10 3 10.6C1 12 .6 14.6 2.4 16.2C4 17.6 6.6 17.4 8 15.8C8.8 16.8 9.6 16.4 10 15.4C10.4 16.4 11.2 16.8 12 15.8C13.4 17.4 16 17.6 17.6 16.2C19.4 14.6 19 12 17 10.6C17.6 10 17.6 9.2 16.8 8.6C18.8 7.4 19.8 4.6 18.4 2.4C17 .4 14 .4 12.4 2.2C11.6 1.4 10.6 1.6 10 3.2Z" fill="#94b4ea"/></g>
<!-- new -->
<path d="M11.7 57.7H20.6L24.6 61.7V72.2H11.7Z" fill="#f1efee" stroke="#1c1a19" stroke-width="1.3" stroke-linejoin="round"/>
<path d="M20.6 57.7V61.7H24.6" fill="#fff" stroke="#1c1a19" stroke-width="1.1" stroke-linejoin="round"/>
<!-- open -->
<path d="M33.9 70.6V61.8Q33.9 60.6 35.1 60.6H37.6Q38.4 60.6 38.9 61.6H44.6Q45.7 61.6 45.7 62.8V65.2" fill="#dad7d4" stroke="#1c1a19" stroke-width="1.3" stroke-linejoin="round"/>
<path d="M34 71.2L39 65.4H50.6L45.4 71.2Z" fill="#f4f3f2" stroke="#1c1a19" stroke-width="1.3" stroke-linejoin="round"/>
<path d="M42.6 58.4Q43.6 55.6 47.6 57.8" fill="none" stroke="#2a2624" stroke-width="1"/>
<path d="M46.6 59.6L50.8 60.6L49.6 56.6Z" fill="#111"/>
<!-- save -->
<rect x="57.6" y="56.6" width="16.8" height="16.6" rx="1.6" fill="#e2e0de" stroke="#6c6864" stroke-width="1.3"/>
<rect x="60.6" y="56.8" width="10.8" height="8.6" fill="#fdf4f3" stroke="#1c1a19" stroke-width="1.2"/>
<rect x="62.2" y="59" width="7.6" height="1.7" fill="#d45454"/><rect x="62.2" y="61.5" width="7.6" height="1.6" fill="#d45454"/>
<path d="M61.6 73V67.6H69.4V73" fill="#fff" stroke="#1c1a19" stroke-width="1.2"/>
<rect x="63.4" y="69" width="1.8" height="4" fill="#222"/>
<!-- sd -->
<defs><linearGradient id="sdg" x1="0" y1="0" x2="1" y2="1"><stop offset="0" stop-color="#1c48b8"/><stop offset=".5" stop-color="#3a7ee0"/><stop offset="1" stop-color="#1a46b4"/></linearGradient></defs>
<path d="M83.6 57H92.4L96.3 60.8V72.4H83.6Z" fill="url(#sdg)" stroke="#0c2880" stroke-width="1.2" stroke-linejoin="round"/>
<rect x="84.2" y="59.4" width="10" height="2.2" fill="#b80c24"/>
<text x="84.6" y="70.8" font-family="'Liberation Sans',sans-serif" font-weight="bold" font-size="6.6" fill="#fff">SD</text>
<!-- print -->
<path d="M115 63.6L119.6 56.4H128.6L124.4 63.6Z" fill="#ecebe9" stroke="#1c1a19" stroke-width="1.2" stroke-linejoin="round"/>
<path d="M117.8 60.4H125.6" stroke="#8c8884" stroke-width="1"/>
<path d="M111.6 68.6Q111.6 66 114.6 64.4L124.6 63.4Q128.2 63.2 128.4 65.2V67.2Q128.4 69 126 70.6L123.6 72.6Q122.6 73.4 121 73.4H114Q111.6 73.4 111.6 71Z" fill="#eeedeb" stroke="#1c1a19" stroke-width="1.4" stroke-linejoin="round"/>
<path d="M112 67.4H122.8Q125 67.2 128 64.8M112 70.6H122.6Q124.6 70.6 128.2 67.6" fill="none" stroke="#1c1a19" stroke-width="1.1"/>
<rect x="120.4" y="68.3" width="2.6" height="1.5" fill="#b8b020"/>
<!-- cutter -->
<rect x="139.6" y="64" width="9" height="8.7" fill="#fff" stroke="#1c1a19" stroke-width="1.2"/>
<path d="M146.6 66.2L141.6 68.4L146.6 70.6M144.6 67.1V69.7" fill="none" stroke="#e04848" stroke-width="1.1"/>
<rect x="136.2" y="57.6" width="16.2" height="6.4" rx="2.4" fill="#d8d6d4" stroke="#1c1a19" stroke-width="1.4"/>
<path d="M137.6 59.6H150" stroke="#1c1a19" stroke-width="1.1"/>
<rect x="149.8" y="58.4" width="2.6" height="5" fill="#0c1c10"/><rect x="150.4" y="60.6" width="1.3" height="1.5" fill="#24b43c"/>
<!-- copy (disabled) -->
<path d="M165.8 56.4H171.6L174.6 59.4V68H165.8Z" fill="#f0efee" stroke="#a4a2a0" stroke-width="1"/>
<path d="M167.4 60.4H170.4M167.4 62.8H172.6M167.4 65.2H172.6" stroke="#b4b2b0" stroke-width="1"/>
<path d="M171.6 62.2H178.2L181.6 65.4V73.4H171.6Z" fill="#f2f2f4" stroke="#a4acc8" stroke-width="1"/>
<path d="M173.4 66H176.4M173.4 68.4H179.8M173.4 70.8H179.8" stroke="#a8b0c8" stroke-width="1.1"/>
<!-- paste (disabled) -->
<rect x="189.6" y="58.6" width="15" height="13" rx="1.6" fill="#efeeed" stroke="#9c9a98" stroke-width="1"/>
<path d="M193.4 60.8V58.6Q193.4 58 194.2 58H195.4Q195.6 56.2 197.1 56.2Q198.6 56.2 198.8 58H200Q200.8 58 200.8 58.6V60.8Z" fill="#efeeed" stroke="#9c9a98" stroke-width="1"/>
<path d="M196.6 64.8H203.6L206.6 67.6V72.8H196.6Z" fill="#f2f2f6" stroke="#a4acd0" stroke-width="1"/>
<path d="M198 68H202M198 70.4H205.4" stroke="#a8b0d4" stroke-width="1.4"/>
<!-- cut (disabled) -->
<path d="M219.2 56.2L223 67.6M224.6 56.2L220.8 67.6" stroke="#8c8c8c" stroke-width="1" fill="none"/>
<ellipse cx="218.8" cy="70.2" rx="2.4" ry="2.8" transform="rotate(25 218.8 70.2)" fill="none" stroke="#a8b0d8" stroke-width="1.1"/>
<ellipse cx="225" cy="70.2" rx="2.4" ry="2.8" transform="rotate(-25 225 70.2)" fill="none" stroke="#a8b0d8" stroke-width="1.1"/>
<!-- undo -->
<path d="M249 64.4Q253.4 58.6 257.2 60.6Q260.4 62.6 257 68.6" fill="none" stroke="#111" stroke-width="1.3"/>
<path d="M244.3 61L251 67.4L244.5 67.8Z" fill="#0a0a0a"/>
<!-- redo (disabled) -->
<path d="M278 64.4Q273.6 58.6 270 60.6Q266.8 62.6 270.2 68.6" fill="none" stroke="#8c8c8c" stroke-width="1"/>
<path d="M283 61L276.6 67.4L283 67.6Z" fill="#a4a2a0"/>
<!-- zoom in -->
<circle cx="305.9" cy="62.7" r="6.2" fill="#fafafa" stroke="#0a0a0a" stroke-width="1.3"/>
<path d="M302.3 62.7H309.5M305.9 59.1V66.3" stroke="#0a0a0a" stroke-width="2.2"/>
<path d="M310.6 67.4L316 72.8" stroke="#0a0a0a" stroke-width="2.4"/>
<!-- zoom out -->
<circle cx="329.9" cy="62.7" r="6.2" fill="#fafafa" stroke="#0a0a0a" stroke-width="1.3"/>
<path d="M326.2 62.7H333.6" stroke="#0a0a0a" stroke-width="2.2"/>
<path d="M334.6 67.4L340 72.8" stroke="#0a0a0a" stroke-width="2.4"/>
<!-- selection zoom -->
<path d="M351.3 56.4V58.6M351.3 62V64.2M347.2 60.3H349.4M353.2 60.3H355.4" stroke="#0a0a0a" stroke-width="1.3"/>
<circle cx="357" cy="66.1" r="3.6" fill="#fafafa" stroke="#0a0a0a" stroke-width="1.2"/>
<path d="M355.4 66.1H358.6M357 64.5V67.7" stroke="#0a0a0a" stroke-width="1.3"/>
<path d="M359.6 68.8L363.2 72.4" stroke="#0a0a0a" stroke-width="1.5"/>
<!-- drag zoom -->
<path d="M380 56.8L386.2 60H383.6V63.3H388.8L380 71.8L371.2 63.3H376.4V60H373.8Z" fill="#fafafa" stroke="#0a0a0a" stroke-width="1.2" stroke-linejoin="miter"/>
<!-- fit page -->
<rect x="395.6" y="57.4" width="16.4" height="15.2" fill="#6e6864" stroke="#241f1c" stroke-width="1.3"/>
<rect x="400" y="59.6" width="7.6" height="10.6" fill="#fdfcfc" stroke="#14110f" stroke-width="1.2"/>
<!-- home -->
<rect x="921.6" y="64" width="12.8" height="9.4" fill="#fbfafa" stroke="#14110f" stroke-width="1.3"/>
<path d="M924.2 56.4H932L935.8 64H920.4Z" fill="#a9a5a2" stroke="#14110f" stroke-width="1.3" stroke-linejoin="round"/>
<path d="M924.6 73.2V69.4Q924.6 68.4 926 68.4Q927.4 68.4 927.4 69.4V73.2" fill="#9c9894" stroke="#14110f" stroke-width="1.1"/>
<!-- bucket -->
<path d="M950.2 71.4Q954 70.4 957.4 67Q958.8 70 961.8 72.4Q956 73.4 950.2 71.4Z" fill="#2f4fe0" stroke="#2f4fe0" stroke-width=".8" stroke-linejoin="round"/>
<g transform="translate(955.9 63.7) rotate(-40)"><path d="M0 -4.7L7.6 -4Q9.6 0 7.6 4L0 4.7Z" fill="#f6f5f4" stroke="#14110f" stroke-width="1.2" stroke-linejoin="round"/><ellipse cx="0" cy="0" rx="2.5" ry="4.7" fill="#dcdad8" stroke="#14110f" stroke-width="1.2"/></g>
<!-- gradient -->
<defs><linearGradient id="gfill" x1="0" y1="0" x2="0" y2="1"><stop offset="0" stop-color="#2f8fe6"/><stop offset=".45" stop-color="#7ab8ee"/><stop offset="1" stop-color="#f2f7fc"/></linearGradient></defs>
<rect x="974.6" y="58.4" width="15" height="13.2" fill="url(#gfill)" stroke="#1a2c48" stroke-width="1.3"/>
<!-- pattern -->
<rect x="998.4" y="58.4" width="15.2" height="13.2" fill="#fcfeff" stroke="#1c4660" stroke-width="1.3"/>
<g fill="#4f9cc2"><circle cx="1000.6" cy="59.8" r="1"/><circle cx="1005" cy="59.8" r="1"/><circle cx="1009.6" cy="59.8" r="1"/><circle cx="1003" cy="63.2" r="1.1"/><circle cx="1007.4" cy="63.2" r="1.1"/><circle cx="1011.8" cy="63.2" r="1.1"/><circle cx="1000.8" cy="67" r="1.1"/><circle cx="1005" cy="67" r="1.1"/><circle cx="1009.6" cy="67" r="1.1"/><circle cx="1003" cy="70.4" r="1"/><circle cx="1007.4" cy="70.4" r="1"/><circle cx="1011.8" cy="70.4" r="1"/></g>
<!-- line colours -->
<path d="M1029.4 59.2H1042.2" stroke="#f0c49c" stroke-width="1"/>
<path d="M1029.2 62.9H1042.4" stroke="#e0645c" stroke-width="1.8" stroke-linecap="round"/>
<path d="M1029.2 66.4H1042.6" stroke="#0c0c84" stroke-width="1.5" stroke-linecap="round"/>
<path d="M1029.4 69.8H1042.6" stroke="#1c8a1c" stroke-width="2" stroke-linecap="round"/>
<!-- line styles -->
<path d="M1052.6 59.5H1067" stroke="#2a2a2a" stroke-width=".9" stroke-dasharray="1 1.1"/>
<path d="M1052.8 62.9H1066.6" stroke="#4a4644" stroke-width="1.5" stroke-dasharray="3.4 1.8"/>
<path d="M1053 66.4H1066.6" stroke="#0a0a0a" stroke-width="1.5" stroke-linecap="round"/>
<path d="M1053 69.8H1066.4" stroke="#0a0a0a" stroke-width="2.2" stroke-linecap="round"/>
<!-- cut style -->
<path d="M1074.8 64.6H1093.4" stroke="#e03030" stroke-width="1.3" stroke-dasharray="2.6 1.6"/>
<ellipse cx="1078.8" cy="61.8" rx="1.9" ry="1.5" transform="rotate(20 1078.8 61.8)" fill="none" stroke="#14110f" stroke-width="1.1"/>
<ellipse cx="1078.8" cy="67.6" rx="1.9" ry="1.5" transform="rotate(-20 1078.8 67.6)" fill="none" stroke="#14110f" stroke-width="1.1"/>
<path d="M1080.4 62.6L1089.6 66.6M1080.4 66.8L1089.6 62.6" stroke="#14110f" stroke-width="1.3" fill="none"/>
<!-- text style A -->
<text x="1108.2" y="70" font-family="'Liberation Serif',serif" font-weight="bold" font-size="16.6" fill="#0a0a0a">A</text>
<!-- move -->
<g fill="#fbfafa" stroke="#14110f" stroke-width="1.1" stroke-linejoin="round">
<path d="M1143.8 56.2L1146.5 60.8L1143.8 62.9L1141.1 60.8Z"/>
<path d="M1143.8 73.6L1146.5 69L1143.8 66.9L1141.1 69Z"/>
<path d="M1135.2 64.9L1139.8 62.2L1141.9 64.9L1139.8 67.6Z"/>
<path d="M1152.4 64.9L1147.8 62.2L1145.7 64.9L1147.8 67.6Z"/>
</g>
<!-- rotate -->
<path d="M1168.6 71.2A7 7 0 1 0 1164.4 61" fill="none" stroke="#14110f" stroke-width="3.6" stroke-linecap="round"/>
<path d="M1168.6 71.2A7 7 0 1 0 1164.4 61" fill="none" stroke="#fbfafa" stroke-width="1.5" stroke-linecap="round"/>
<path d="M1158.8 63.2L1168.2 60.8L1164 69.4Z" fill="#fbfafa" stroke="#14110f" stroke-width="1.1" stroke-linejoin="round"/>
<!-- scale -->
<rect x="1184.8" y="56.6" width="14.6" height="16.8" fill="none" stroke="#5874c4" stroke-width="1.1" stroke-dasharray="1.6 1.3"/>
<path d="M1192.4 64.6L1197.6 58.6M1192.4 64.6L1186.6 71.6" stroke="#14110f" stroke-width="1.1"/>
<rect x="1189.4" y="61.8" width="6" height="6" fill="#fbfafa" stroke="#14110f" stroke-width="1.2"/>
<path d="M1198.6 57.2L1198.2 61.2L1195 58.2Z" fill="#fbfafa" stroke="#14110f" stroke-width="1" stroke-linejoin="round"/>
<path d="M1185.4 72.8L1185.6 68.6L1189 71.8Z" fill="#fbfafa" stroke="#14110f" stroke-width="1" stroke-linejoin="round"/>
<!-- align -->
<path d="M1208 65H1224" stroke="#14110f" stroke-width="1"/>
<rect x="1209.2" y="60.4" width="3" height="9.2" fill="#fbfafa" stroke="#14110f" stroke-width="1.2"/>
<rect x="1214.6" y="62.2" width="2.8" height="5.6" fill="#fbfafa" stroke="#14110f" stroke-width="1.2"/>
<rect x="1219.8" y="57.6" width="3" height="14.8" fill="#fbfafa" stroke="#14110f" stroke-width="1.2"/>
<!-- replicate -->
<g fill="#fbfafa" stroke="#14110f" stroke-width="1.1">
<ellipse cx="1240" cy="65" rx="8.6" ry="2.2" transform="rotate(0 1240 65)"/>
<ellipse cx="1240" cy="65" rx="8.2" ry="2.2" transform="rotate(36 1240 65)"/>
<ellipse cx="1240" cy="65" rx="8.2" ry="2.2" transform="rotate(72 1240 65)"/>
<ellipse cx="1240" cy="65" rx="8.2" ry="2.2" transform="rotate(108 1240 65)"/>
<ellipse cx="1240" cy="65" rx="8.2" ry="2.2" transform="rotate(144 1240 65)"/>
<ellipse cx="1240" cy="65" rx="8.8" ry="2.4" transform="rotate(-58 1240 65)"/>
</g>
<!-- modify -->
<rect x="1261.6" y="63.2" width="13.8" height="9.2" fill="#8c8682" stroke="#46403c" stroke-width="1.2"/>
<circle cx="1272.9" cy="62.8" r="5.2" fill="#fdfdfe" stroke="#2a2624" stroke-width="1.1"/>
<text x="1272.9" y="65.7" text-anchor="middle" font-family="'Liberation Sans',sans-serif" font-weight="bold" font-size="8" fill="#4a90e2">M</text>
<!-- offset -->
<rect x="1285.8" y="56.8" width="16.6" height="16.2" rx="2.6" fill="#fbfafa" stroke="#14110f" stroke-width="1.3"/>
<rect x="1288" y="58.8" width="12.4" height="12.4" fill="#f6f5f4" stroke="#3a3634" stroke-width="1"/>
<path d="M1297 65.2H1300" stroke="#14110f" stroke-width="1"/><circle cx="1300" cy="65.2" r="1.2" fill="#14110f"/>
<!-- trace -->
<rect x="1310.6" y="57.4" width="15" height="15" rx="2.6" fill="#dcdad2" stroke="#5c6c8c" stroke-width="1.1"/>
<rect x="1312.4" y="59.3" width="11.4" height="11.3" rx="2" fill="#e2da3c"/>
<path d="M1314.4 62.2Q1314.2 61.4 1315.4 61.4H1321Q1322 61.4 1321.8 62.2Q1320.8 64.9 1321.8 67.6Q1322 68.4 1321 68.4H1315.4Q1314.2 68.4 1314.4 67.6Q1315.4 64.9 1314.4 62.2Z" fill="#2f72e6"/>
<!-- page -->
<rect x="1339.6" y="57.5" width="16.4" height="14.8" fill="#fbf6f6" stroke="#14110f" stroke-width="1.3"/>
<rect x="1342.4" y="60.2" width="11" height="9.2" fill="#f8f6f6" stroke="#e26a6a" stroke-width="1.2"/>
<!-- pen -->
<path d="M1370 63.6L1376.4 57.2L1380.2 61L1373.8 67.4Z" fill="#5a5450" stroke="#2a2624" stroke-width=".8" stroke-linejoin="round"/>
<path d="M1370 63.6L1373.8 67.4L1366.4 71.6Z" fill="#e4dc20" stroke="#3a3a1c" stroke-width=".8" stroke-linejoin="round"/>
<path d="M1366.4 71.6L1368.2 70.6L1367.4 69.8Z" fill="#2a2a1a"/>
<!-- reg marks -->
<path d="M1388.4 61.4V57.6H1392.4M1399.6 57.6H1403.4V61.4M1388.4 68.4V72.2H1392.2" fill="none" stroke="#0a0a0a" stroke-width="1.8"/>
<!-- grid -->
<rect x="1413.2" y="57.8" width="14.4" height="14.4" fill="#7e92e4"/>
<g fill="#fcfcff"><rect x="1414.6" y="59" width="2.1" height="2.1"/><rect x="1418" y="59" width="2.1" height="2.1"/><rect x="1421.4" y="59" width="2.1" height="2.1"/><rect x="1424.8" y="59" width="2.1" height="2.1"/>
<rect x="1414.6" y="62.4" width="2.1" height="2.1"/><rect x="1418" y="62.4" width="2.1" height="2.1"/><rect x="1421.4" y="62.4" width="2.1" height="2.1"/><rect x="1424.8" y="62.4" width="2.1" height="2.1"/>
<rect x="1414.6" y="65.8" width="2.1" height="2.1"/><rect x="1418" y="65.8" width="2.1" height="2.1"/><rect x="1421.4" y="65.8" width="2.1" height="2.1"/><rect x="1424.8" y="65.8" width="2.1" height="2.1"/>
<rect x="1414.6" y="69.2" width="2.1" height="2.1"/><rect x="1418" y="69.2" width="2.1" height="2.1"/><rect x="1421.4" y="69.2" width="2.1" height="2.1"/><rect x="1424.8" y="69.2" width="2.1" height="2.1"/></g>
<path d="M1417.35 58V72M1420.75 58V72M1424.15 58V72M1413.4 61.75H1427.4M1413.4 65.15H1427.4M1413.4 68.55H1427.4" stroke="#1c2458" stroke-width=".7" opacity=".8"/>
</svg><!-- ICONS-END -->
</body>
</html>
